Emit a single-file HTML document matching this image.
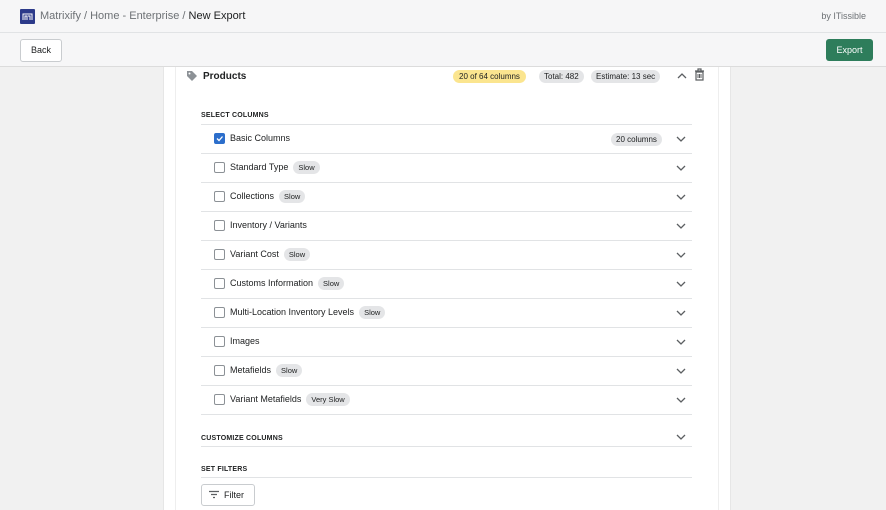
<!DOCTYPE html>
<html><head><style>
*{box-sizing:border-box;margin:0;padding:0}
body{width:886px;height:510px;overflow:hidden;background:#f1f1f1;font-family:"Liberation Sans",sans-serif;color:#202223;position:relative}
.top{position:absolute;left:0;top:0;width:886px;height:33px;background:#f6f6f7;border-bottom:1px solid #e1e3e5}
.bar{position:absolute;left:0;top:33px;width:886px;height:34px;background:#f6f6f7;border-bottom:1px solid #dcdcdc}
.logo{position:absolute;left:20px;top:9px;width:15px;height:15px;background:#2c3a8a;border-radius:1px}
.crumb{position:absolute;left:40px;top:10px;font-size:11px;color:#6d7175}
.crumb b{font-weight:normal;color:#202223}
.by{position:absolute;right:20px;top:11px;font-size:9px;color:#6d7175}
.btn{position:absolute;border:1px solid #c9cccf;background:#fff;border-radius:3px;font-size:9px;text-align:center}
.export{position:absolute;left:826px;top:39px;width:47px;height:22px;background:#2e7d5b;border-radius:3px;color:#fff;font-size:9px;text-align:center;line-height:22px}
.panel{position:absolute;left:163px;top:67px;width:568px;height:443px;background:#fff;border-left:1px solid #e6e6e6;border-right:1px solid #e6e6e6}
.card{position:absolute;left:175px;top:67px;width:544px;height:443px;border-left:1px solid #eee;border-right:1px solid #eee}
.t{position:absolute;font-size:9px}
.r{position:absolute;left:230px;font-size:9px;height:14px;display:flex;align-items:center;white-space:nowrap}
.h{position:absolute;left:201px;font-size:7px;font-weight:bold;letter-spacing:.2px}
.line{position:absolute;left:201px;width:491px;height:1px;background:#e1e3e5}
.cb{position:absolute;left:214px;width:11px;height:11px;border:1px solid #8c9196;border-radius:2px;background:#fff}
.pill{display:inline-block;background:#e4e5e7;border-radius:8px;font-size:7.5px;padding:2px 5px;margin-left:5px;line-height:9px}
.chev{position:absolute;left:676px;width:10px;height:8px}
</style></head><body>
<div class="top"><div class="logo"><svg width="15" height="15"><path d="M3 11V5h9v6M5 11V7h2v4M8 7h2v4" stroke="#fff" fill="none" stroke-width="1"/></svg></div>
<div class="crumb">Matrixify / Home - Enterprise / <b>New Export</b></div><div class="by">by ITissible</div></div>
<div class="bar"></div>
<div class="btn" style="left:20px;top:39px;width:42px;height:23px;line-height:21px">Back</div>
<div class="export">Export</div>
<div class="panel"></div><div class="card"></div>
<svg style="position:absolute;left:186px;top:70px" width="12" height="12"><path d="M1 6V1h5l5 5-5 5z" fill="#8c9196"/><circle cx="3.5" cy="3.5" r="1" fill="#fff"/></svg>
<div class="t" style="left:203px;top:71px;font-size:10px;font-weight:bold">Products</div>
<div class="t" style="left:453px;top:70px;background:#fbe58f;border-radius:8px;padding:2px 6px;font-size:8px">20 of 64 columns</div>
<div class="t" style="left:539px;top:70px;background:#e4e5e7;border-radius:8px;padding:2px 5px;font-size:8px">Total: 482</div>
<div class="t" style="left:591px;top:70px;background:#e4e5e7;border-radius:8px;padding:2px 5px;font-size:8px">Estimate: 13 sec</div>
<svg style="position:absolute;left:677px;top:72px" width="10" height="7"><path d="M1 6l4-4 4 4" stroke="#5c5f62" fill="none" stroke-width="1.3"/></svg>
<svg style="position:absolute;left:694px;top:68px" width="11" height="13"><path d="M1 3h9M4 3V1h3v2M2 4h7v8H2z" stroke="#5c5f62" fill="none" stroke-width="1.2"/><path d="M4 6v4M5.5 6v4M7 6v4" stroke="#5c5f62"/></svg>
<div class="h" style="top:112px">SELECT COLUMNS</div>
<div class="line" style="top:124px"></div>
<div class="cb" style="top:133px;background:#2c6ecb;border-color:#2c6ecb"><svg width="9" height="9" style="position:absolute;left:0;top:0"><path d="M2 4.5l2 2 3.5-4" stroke="#fff" fill="none" stroke-width="1.3"/></svg></div>
<div class="r" style="top:131px">Basic Columns</div>
<div class="t" style="left:611px;top:133px;background:#e4e5e7;border-radius:8px;padding:2px 5px;font-size:8px">20 columns</div>
<div class="line" style="top:153px"></div>
<div class="cb" style="top:162px"></div><div class="r" style="top:160px">Standard Type<span class="pill">Slow</span></div><div class="line" style="top:182px"></div>
<div class="cb" style="top:191px"></div><div class="r" style="top:189px">Collections<span class="pill">Slow</span></div><div class="line" style="top:211px"></div>
<div class="cb" style="top:220px"></div><div class="r" style="top:218px">Inventory / Variants</div><div class="line" style="top:240px"></div>
<div class="cb" style="top:249px"></div><div class="r" style="top:247px">Variant Cost<span class="pill">Slow</span></div><div class="line" style="top:269px"></div>
<div class="cb" style="top:278px"></div><div class="r" style="top:276px">Customs Information<span class="pill">Slow</span></div><div class="line" style="top:298px"></div>
<div class="cb" style="top:307px"></div><div class="r" style="top:305px">Multi-Location Inventory Levels<span class="pill">Slow</span></div><div class="line" style="top:327px"></div>
<div class="cb" style="top:336px"></div><div class="r" style="top:334px">Images</div><div class="line" style="top:356px"></div>
<div class="cb" style="top:365px"></div><div class="r" style="top:363px">Metafields<span class="pill">Slow</span></div><div class="line" style="top:385px"></div>
<div class="cb" style="top:394px"></div><div class="r" style="top:392px">Variant Metafields<span class="pill">Very Slow</span></div><div class="line" style="top:414px"></div>
<svg class="chev" style="top:135px"><path d="M1 2l4 4 4-4" stroke="#5c5f62" fill="none" stroke-width="1.3"/></svg>
<svg class="chev" style="top:164px"><path d="M1 2l4 4 4-4" stroke="#5c5f62" fill="none" stroke-width="1.3"/></svg>
<svg class="chev" style="top:193px"><path d="M1 2l4 4 4-4" stroke="#5c5f62" fill="none" stroke-width="1.3"/></svg>
<svg class="chev" style="top:222px"><path d="M1 2l4 4 4-4" stroke="#5c5f62" fill="none" stroke-width="1.3"/></svg>
<svg class="chev" style="top:251px"><path d="M1 2l4 4 4-4" stroke="#5c5f62" fill="none" stroke-width="1.3"/></svg>
<svg class="chev" style="top:280px"><path d="M1 2l4 4 4-4" stroke="#5c5f62" fill="none" stroke-width="1.3"/></svg>
<svg class="chev" style="top:309px"><path d="M1 2l4 4 4-4" stroke="#5c5f62" fill="none" stroke-width="1.3"/></svg>
<svg class="chev" style="top:338px"><path d="M1 2l4 4 4-4" stroke="#5c5f62" fill="none" stroke-width="1.3"/></svg>
<svg class="chev" style="top:367px"><path d="M1 2l4 4 4-4" stroke="#5c5f62" fill="none" stroke-width="1.3"/></svg>
<svg class="chev" style="top:396px"><path d="M1 2l4 4 4-4" stroke="#5c5f62" fill="none" stroke-width="1.3"/></svg>
<svg class="chev" style="top:433px"><path d="M1 2l4 4 4-4" stroke="#5c5f62" fill="none" stroke-width="1.3"/></svg>
<div class="h" style="top:435px">CUSTOMIZE COLUMNS</div>
<div class="line" style="top:446px"></div>
<div class="h" style="top:466px">SET FILTERS</div>
<div class="line" style="top:477px"></div>
<div class="btn" style="left:201px;top:484px;width:54px;height:22px;line-height:20px;padding-left:12px">Filter</div>
<svg style="position:absolute;left:208px;top:490px" width="12" height="9"><path d="M1 1.5h10M3 4.5h6M5 7.5h2" stroke="#5c5f62" stroke-width="1.2"/></svg>
</body></html>
